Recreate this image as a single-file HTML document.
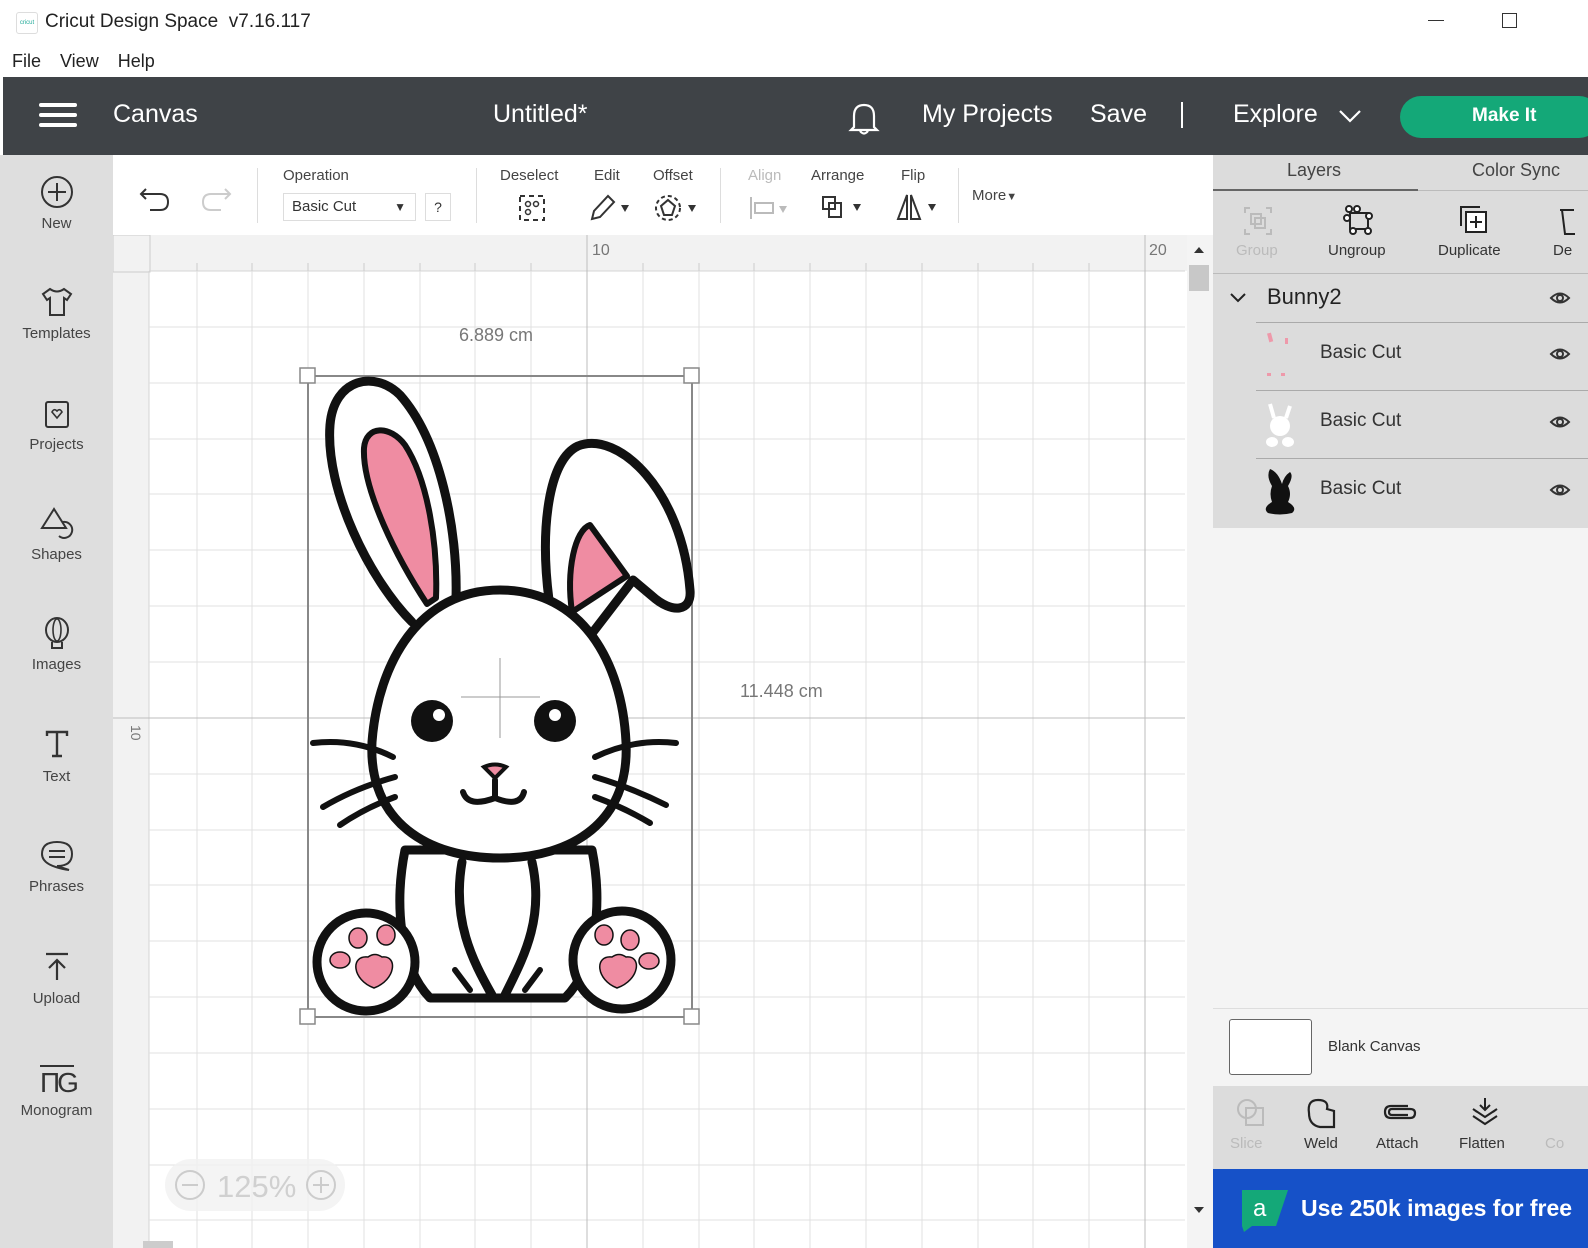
<!DOCTYPE html>
<html><head><meta charset="utf-8"><style>
*{margin:0;padding:0;box-sizing:border-box}
body{width:1588px;height:1248px;position:relative;overflow:hidden;background:#fff;font-family:"Liberation Sans",sans-serif;color:#333}
.a{position:absolute}
.side{left:0;top:155px;width:113px;height:1093px;background:#dedede}
.si{position:absolute;left:0;width:113px;text-align:center;font-size:15px;color:#444}
.si svg{display:block;margin:0 auto 6px}
.tl{font-size:15px;color:#444}
.rp{font-size:16px;color:#333}
</style></head><body>
<!-- title bar -->
<div class="a" style="left:16px;top:12px;width:22px;height:22px;border:1px solid #ddd;border-radius:3px;font-size:6px;color:#2a9;line-height:20px;text-align:center">cricut</div>
<div class="a" style="left:45px;top:11px;font-size:19px;color:#222">Cricut Design Space&nbsp; v7.16.117</div>
<div class="a" style="left:1428px;top:20px;width:16px;height:1px;background:#333"></div>
<div class="a" style="left:1502px;top:13px;width:15px;height:15px;border:1.5px solid #333"></div>
<div class="a" style="left:12px;top:51px;font-size:18px;color:#222;word-spacing:14px">File View Help</div>
<!-- top dark bar -->
<div class="a" style="left:3px;top:77px;width:1585px;height:78px;background:#3f4347"></div>
<div class="a" style="left:39px;top:103px;width:38px;height:4px;background:#fff;box-shadow:0 10px 0 #fff,0 20px 0 #fff;border-radius:2px"></div>
<div class="a" style="left:113px;top:100px;font-size:25px;color:#fff">Canvas</div>
<div class="a" style="left:493px;top:100px;font-size:25px;color:#fff">Untitled*</div>
<svg class="a" style="left:848px;top:100px" width="32" height="36" viewBox="0 0 32 36"><path d="M6 27 L6 16 Q6 5 16 5 Q26 5 26 16 L26 27 L29 30 L3 30 Z M12 31 Q16 36 20 31" fill="none" stroke="#fff" stroke-width="2.2"/></svg>
<div class="a" style="left:922px;top:100px;font-size:25px;color:#fff">My Projects</div>
<div class="a" style="left:1090px;top:100px;font-size:25px;color:#fff">Save</div>
<div class="a" style="left:1181px;top:102px;width:2px;height:26px;background:#fff"></div>
<div class="a" style="left:1233px;top:100px;font-size:25px;color:#fff">Explore</div>
<svg class="a" style="left:1338px;top:108px" width="24" height="16"><path d="M2 3 L12 13 L22 3" fill="none" stroke="#fff" stroke-width="2.2"/></svg>
<div class="a" style="left:1400px;top:96px;width:200px;height:42px;border-radius:21px;background:#14a878;color:#fff;font-size:19px;font-weight:bold;line-height:40px;padding-left:72px">Make It</div>
<!-- sidebar -->
<div class="a side"></div>
<div class="si" style="top:175px"><svg width="34" height="34"><circle cx="17" cy="17" r="15" fill="none" stroke="#333" stroke-width="2"/><path d="M17 8v18M8 17h18" stroke="#333" stroke-width="2"/></svg>New</div>
<div class="si" style="top:285px"><svg width="36" height="34"><path d="M11 4 L4 9 L8 15 L11 13 L11 30 L25 30 L25 13 L28 15 L32 9 L25 4 Q18 9 11 4Z" fill="none" stroke="#333" stroke-width="2"/></svg>Templates</div>
<div class="si" style="top:396px"><svg width="30" height="34"><rect x="4" y="6" width="22" height="25" rx="2" fill="none" stroke="#333" stroke-width="2"/><path d="M15 22 L10 16 Q12 12 15 15 Q18 12 20 16Z" fill="none" stroke="#333" stroke-width="1.6"/></svg>Projects</div>
<div class="si" style="top:506px"><svg width="36" height="34"><path d="M15 3 L3 22 L27 22Z M24 16 A8 8 0 1 1 20 30" fill="none" stroke="#333" stroke-width="2"/></svg>Shapes</div>
<div class="si" style="top:616px"><svg width="30" height="34"><ellipse cx="15" cy="14" rx="11" ry="12" fill="none" stroke="#333" stroke-width="2"/><ellipse cx="15" cy="14" rx="4" ry="11" fill="none" stroke="#333" stroke-width="1.6"/><path d="M10 26 L10 32 L20 32 L20 26" fill="none" stroke="#333" stroke-width="2"/></svg>Images</div>
<div class="si" style="top:728px"><svg width="30" height="34"><path d="M5 8 L5 4 L25 4 L25 8 M15 4 L15 28 M10 28 L20 28" fill="none" stroke="#333" stroke-width="2.4"/></svg>Text</div>
<div class="si" style="top:838px"><svg width="36" height="34"><path d="M18 4 Q33 4 33 16 Q33 28 18 28 L30 32 Q3 28 3 16 Q3 4 18 4Z" fill="none" stroke="#333" stroke-width="2"/><path d="M10 13h16M10 19h16" stroke="#333" stroke-width="2"/></svg>Phrases</div>
<div class="si" style="top:950px"><svg width="30" height="34"><path d="M4 4h22M15 30V10M7 18l8-8 8 8" fill="none" stroke="#333" stroke-width="2.2"/></svg>Upload</div>
<div class="si" style="top:1062px"><svg width="40" height="34"><text x="3" y="30" font-size="28" font-family="Liberation Sans" fill="#333" letter-spacing="-3">ПG</text><path d="M3 4h34" stroke="#333" stroke-width="2"/></svg>Monogram</div>
<!-- toolbar -->
<div class="a" style="left:113px;top:155px;width:1100px;height:80px;background:#fff"></div>
<svg class="a" style="left:138px;top:183px" width="95" height="30"><path d="M8 6 L3 11 L8 16 M3 11 L22 11 Q30 11 30 19 Q30 27 22 27 L12 27" fill="none" stroke="#333" stroke-width="2"/><path d="M87 6 L92 11 L87 16 M92 11 L73 11 Q65 11 65 19 Q65 27 73 27 L83 27" fill="none" stroke="#ccc" stroke-width="2"/></svg>
<div class="a" style="left:257px;top:168px;width:1px;height:55px;background:#ddd"></div>
<div class="a tl" style="left:283px;top:167px">Operation</div>
<div class="a" style="left:283px;top:193px;width:133px;height:28px;border:1px solid #ddd;font-size:15px;line-height:26px;padding-left:8px;color:#333">Basic Cut<span style="position:absolute;right:9px;font-size:12px">▼</span></div>
<div class="a" style="left:425px;top:193px;width:26px;height:28px;border:1px solid #ddd;font-size:14px;line-height:26px;text-align:center">?</div>
<div class="a" style="left:476px;top:168px;width:1px;height:55px;background:#ddd"></div>
<div class="a tl" style="left:500px;top:167px">Deselect</div>
<svg class="a" style="left:517px;top:193px" width="30" height="30"><rect x="3" y="3" width="24" height="24" fill="none" stroke="#333" stroke-width="2" stroke-dasharray="5 4"/><circle cx="11" cy="11" r="2.5" fill="none" stroke="#333" stroke-width="1.5"/><circle cx="19" cy="11" r="2.5" fill="none" stroke="#333" stroke-width="1.5"/><circle cx="11" cy="19" r="2.5" fill="none" stroke="#333" stroke-width="1.5"/></svg>
<div class="a tl" style="left:594px;top:167px">Edit</div>
<svg class="a" style="left:588px;top:193px" width="44" height="30"><path d="M4 26 L6 18 L20 3 L26 9 L12 24 Z" fill="none" stroke="#333" stroke-width="2"/><path d="M33 12 L41 12 L37 19Z" fill="#333"/></svg>
<div class="a tl" style="left:653px;top:167px">Offset</div>
<svg class="a" style="left:654px;top:193px" width="46" height="30"><circle cx="14" cy="15" r="12" fill="none" stroke="#333" stroke-width="2" stroke-dasharray="4 3"/><path d="M14 7 L21 13 L18 22 L10 22 L7 13Z" fill="none" stroke="#333" stroke-width="2"/><path d="M34 12 L42 12 L38 19Z" fill="#333"/></svg>
<div class="a" style="left:720px;top:168px;width:1px;height:55px;background:#ddd"></div>
<div class="a tl" style="left:748px;top:167px;color:#bbb">Align</div>
<svg class="a" style="left:748px;top:195px" width="44" height="26"><path d="M3 2v22M7 8h18v10H7z" fill="none" stroke="#bbb" stroke-width="2"/><path d="M31 11 L39 11 L35 18Z" fill="#bbb"/></svg>
<div class="a tl" style="left:811px;top:167px">Arrange</div>
<svg class="a" style="left:821px;top:194px" width="44" height="28"><path d="M2 3h12v12H2z M8 9h12v14H8z" fill="#fff" stroke="#333" stroke-width="2"/><path d="M32 10 L40 10 L36 17Z" fill="#333"/></svg>
<div class="a tl" style="left:901px;top:167px">Flip</div>
<svg class="a" style="left:896px;top:192px" width="44" height="30"><path d="M11 3 L2 27 L11 27Z M15 3 L24 27 L15 27Z" fill="none" stroke="#333" stroke-width="2"/><path d="M32 12 L40 12 L36 19Z" fill="#333"/></svg>
<div class="a" style="left:958px;top:168px;width:1px;height:55px;background:#ddd"></div>
<div class="a tl" style="left:972px;top:187px">More<span style="font-size:11px">▼</span></div>
<!-- canvas -->
<svg class="a" style="left:113px;top:235px" width="1100" height="1013">
<rect width="1100" height="1013" fill="#fff"/>
<rect x="0" y="0" width="1075" height="36" fill="#f2f2f2"/>
<rect x="0" y="0" width="36" height="1013" fill="#f2f2f2"/>
<rect x="0" y="0" width="37" height="37" fill="#f2f2f2" stroke="#ccc"/>
<line x1="36" y1="36" x2="1072" y2="36" stroke="#d4d4d4"/>
<line x1="36" y1="36" x2="36" y2="1013" stroke="#d4d4d4"/>
<g stroke="#e0e0e0" stroke-width="1">
<path d="M84 36V1013M139 36V1013M195 36V1013M251 36V1013M307 36V1013M362 36V1013M418 36V1013M530 36V1013M586 36V1013M641 36V1013M697 36V1013M753 36V1013M809 36V1013M865 36V1013M920 36V1013M976 36V1013"/>
<path d="M36 92H1072M36 148H1072M36 204H1072M36 259H1072M36 315H1072M36 371H1072M36 427H1072M36 539H1072M36 595H1072M36 650H1072M36 706H1072M36 762H1072M36 818H1072M36 874H1072M36 930H1072M36 985H1072"/>
</g>
<g stroke="#bdbdbd"><path d="M474 0V1013M1032 0V1013M0 483H1072"/></g>
<g stroke="#ccc"><path d="M84 28V36M139 28V36M195 28V36M251 28V36M307 28V36M362 28V36M418 28V36M530 28V36M586 28V36M641 28V36M697 28V36M753 28V36M809 28V36M865 28V36M920 28V36M976 28V36"/></g>
<text x="479" y="20" font-size="16" fill="#777" font-family="Liberation Sans">10</text>
<text x="1036" y="20" font-size="16" fill="#777" font-family="Liberation Sans">20</text>
<text x="6" y="490" font-size="14" fill="#777" font-family="Liberation Sans" transform="rotate(90 12 496)">10</text>
<rect x="1074" y="0" width="26" height="1013" fill="#f4f4f4"/>
<rect x="1076" y="30" width="20" height="26" fill="#c8c8c8"/>
<path d="M1081 18 L1091 18 L1086 12Z M1081 972 L1091 972 L1086 978Z" fill="#333"/>
<rect x="30" y="1006" width="30" height="7" fill="#ccc"/>
<rect x="52" y="924" width="180" height="52" rx="26" fill="#f1f1f1" opacity=".8"/>
<circle cx="77" cy="950" r="14" fill="none" stroke="#ccc" stroke-width="2"/><path d="M69 950h16" stroke="#ccc" stroke-width="2"/>
<text x="104" y="962" font-size="31" fill="#d0d0d0" font-family="Liberation Sans">125%</text>
<circle cx="208" cy="950" r="14" fill="none" stroke="#ccc" stroke-width="2"/><path d="M200 950h16M208 942v16" stroke="#ccc" stroke-width="2"/>
</svg>
<!-- bunny -->
<svg class="a" style="left:0;top:0" width="1200" height="1248">
<rect x="308" y="376" width="384" height="641" fill="none" stroke="#888" stroke-width="2"/>
<g fill="#fff" stroke="#888" stroke-width="1.5"><rect x="300" y="368" width="15" height="15"/><rect x="684" y="368" width="15" height="15"/><rect x="300" y="1009" width="15" height="15"/><rect x="684" y="1009" width="15" height="15"/></g>
<text x="459" y="341" font-size="18" fill="#777" font-family="Liberation Sans">6.889 cm</text>
<text x="740" y="697" font-size="18" fill="#777" font-family="Liberation Sans">11.448 cm</text>
<g stroke="#111" stroke-width="9" stroke-linecap="round" stroke-linejoin="round">
<path d="M412 622 C370 580 325 490 330 425 C334 378 375 370 400 395 C440 440 458 530 456 598" fill="#fff"/>
<path d="M427 604 C398 560 362 490 364 448 C366 425 390 425 405 445 C428 480 438 545 436 598 Z" fill="#ef8ca2" stroke-width="6"/>
<path d="M549 600 C540 530 548 460 578 446 C618 430 682 490 690 590 C692 612 672 614 652 596 L633 580 L590 636" fill="#fff"/>
<path d="M572 612 C566 570 575 530 590 525 L627 576 Z" fill="#ef8ca2" stroke-width="6"/>
<path d="M405 850 C395 900 398 965 430 998 L565 998 C598 965 602 900 592 850 Z" fill="#fff"/>
<path d="M462 862 C452 920 472 960 492 995 M532 862 C545 920 522 960 505 995" fill="none"/>
<path d="M470 990 L455 970 M490 995 L480 975 M505 995 L515 975 M525 990 L540 970" fill="none" stroke-width="6"/>
<path d="M500 590 C582 590 622 662 626 742 C630 822 572 858 500 858 C428 858 368 822 372 742 C378 662 420 590 500 590 Z" fill="#fff"/>
<circle cx="366" cy="962" r="49" fill="#fff"/>
<circle cx="622" cy="960" r="49" fill="#fff"/>
</g>
<g fill="#111"><circle cx="432" cy="721" r="21"/><circle cx="555" cy="721" r="21"/></g>
<g fill="#fff"><circle cx="439" cy="715" r="6"/><circle cx="555" cy="715" r="6"/></g>
<path d="M484 767 Q495 762 506 767 L495 778Z" fill="#ef8ca2" stroke="#111" stroke-width="4"/>
<path d="M463 792 Q468 808 495 798 Q520 808 524 792 M495 780 V798" fill="none" stroke="#111" stroke-width="6" stroke-linecap="round"/>
<g stroke="#111" stroke-width="6" stroke-linecap="round" fill="none">
<path d="M313 743 Q355 738 393 757 M323 807 Q355 788 395 777 M340 825 Q365 808 395 797"/>
<path d="M676 743 Q635 738 595 757 M666 805 Q632 788 595 777 M650 823 Q625 808 595 797"/>
</g>
<g fill="#ef8ca2" stroke="#111" stroke-width="1.5">
<ellipse cx="358" cy="938" rx="9" ry="10"/><ellipse cx="386" cy="935" rx="9" ry="10"/><ellipse cx="340" cy="960" rx="10" ry="8"/>
<path d="M374 988 C352 980 350 955 368 957 Q375 952 382 957 C398 955 396 980 374 988Z"/>
<ellipse cx="604" cy="935" rx="9" ry="10"/><ellipse cx="630" cy="940" rx="9" ry="10"/><ellipse cx="649" cy="961" rx="10" ry="8"/>
<path d="M617 988 C596 980 594 955 612 957 Q619 952 626 957 C642 955 640 980 617 988Z"/>
</g>
<path d="M500 658 V738 M461 697 H540" stroke="#999" stroke-width="1"/>
</svg>
<!-- right panel -->
<div class="a" style="left:1213px;top:155px;width:375px;height:1093px;background:#f4f4f4"></div>
<div class="a" style="left:1213px;top:155px;width:375px;height:373px;background:#dcdcdc"></div>
<div class="a" style="left:1213px;top:189px;width:205px;height:2px;background:#666"></div>
<div class="a" style="left:1418px;top:190px;width:170px;height:1px;background:#bbb"></div>
<div class="a" style="left:1287px;top:160px;font-size:18px;color:#444">Layers</div>
<div class="a" style="left:1472px;top:160px;font-size:18px;color:#444">Color Sync</div>
<svg class="a" style="left:1242px;top:205px" width="32" height="32"><path d="M3 8V3h5M24 3h5v5M29 24v5h-5M8 29H3v-5" fill="none" stroke="#bbb" stroke-width="2"/><rect x="9" y="9" width="10" height="10" fill="none" stroke="#bbb" stroke-width="2"/><rect x="13" y="13" width="10" height="10" fill="none" stroke="#bbb" stroke-width="2"/></svg>
<div class="a rp" style="left:1236px;top:242px;font-size:15px;color:#bbb">Group</div>
<svg class="a" style="left:1343px;top:204px" width="32" height="32"><g fill="none" stroke="#222" stroke-width="2"><rect x="7" y="9" width="18" height="16"/><circle cx="6" cy="5" r="3" fill="#fff"/><circle cx="14" cy="5" r="3" fill="#fff"/><circle cx="4" cy="14" r="3" fill="#fff"/><circle cx="26" cy="12" r="3" fill="#fff"/><circle cx="10" cy="27" r="3" fill="#fff"/><circle cx="25" cy="27" r="3" fill="#fff"/></g></svg>
<div class="a rp" style="left:1328px;top:242px;font-size:15px">Ungroup</div>
<svg class="a" style="left:1458px;top:204px" width="32" height="32"><path d="M3 22V3h19" fill="none" stroke="#222" stroke-width="2"/><rect x="8" y="8" width="20" height="20" fill="#fff" stroke="#222" stroke-width="2"/><path d="M18 12v12M12 18h12" stroke="#222" stroke-width="2"/></svg>
<div class="a rp" style="left:1438px;top:242px;font-size:15px">Duplicate</div>
<svg class="a" style="left:1558px;top:206px" width="30" height="30"><path d="M2 4h14M4 4l3 24h10" fill="none" stroke="#222" stroke-width="2"/></svg>
<div class="a rp" style="left:1553px;top:242px;font-size:15px">De</div>
<div class="a" style="left:1213px;top:273px;width:375px;height:1px;background:#bbb"></div>
<svg class="a" style="left:1229px;top:292px" width="18" height="12"><path d="M2 2l7 7 7-7" fill="none" stroke="#222" stroke-width="2"/></svg>
<div class="a" style="left:1267px;top:284px;font-size:22px;color:#222">Bunny2</div>
<div class="a" style="left:1256px;top:322px;width:332px;height:1px;background:#aaa"></div>
<div class="a" style="left:1256px;top:390px;width:332px;height:1px;background:#aaa"></div>
<div class="a" style="left:1256px;top:458px;width:332px;height:1px;background:#aaa"></div>
<svg class="a" style="left:1260px;top:330px" width="40" height="52"><rect x="8" y="3" width="4" height="9" fill="#e9a" transform="rotate(-15 10 7)"/><rect x="25" y="8" width="3" height="6" fill="#e9a"/><rect x="7" y="43" width="4" height="3" fill="#e9a"/><rect x="21" y="43" width="4" height="3" fill="#e9a"/></svg>
<svg class="a" style="left:1260px;top:398px" width="40" height="52"><ellipse cx="20" cy="28" rx="10" ry="10" fill="#fff"/><ellipse cx="12" cy="44" rx="6" ry="5" fill="#fff"/><ellipse cx="28" cy="44" rx="6" ry="5" fill="#fff"/><path d="M14 20 L10 6 M26 20 L30 8" stroke="#fff" stroke-width="4"/></svg>
<svg class="a" style="left:1260px;top:466px" width="40" height="52"><path d="M10 3 Q6 10 12 20 Q9 28 12 36 Q2 42 8 47 Q20 50 32 47 Q38 42 28 36 Q32 28 28 20 Q34 10 30 6 Q24 10 22 18 Q18 6 10 3Z" fill="#111"/></svg>
<div class="a" style="left:1320px;top:342px;font-size:19px;color:#333">Basic Cut</div>
<div class="a" style="left:1320px;top:410px;font-size:19px;color:#333">Basic Cut</div>
<div class="a" style="left:1320px;top:478px;font-size:19px;color:#333">Basic Cut</div>
<svg class="a" style="left:1548px;top:289px" width="40" height="220"><g fill="none" stroke="#333" stroke-width="2"><path d="M3 9 Q12 0 21 9 Q12 18 3 9Z"/><circle cx="12" cy="9" r="3"/><path d="M3 65 Q12 56 21 65 Q12 74 3 65Z"/><circle cx="12" cy="65" r="3"/><path d="M3 133 Q12 124 21 133 Q12 142 3 133Z"/><circle cx="12" cy="133" r="3"/><path d="M3 201 Q12 192 21 201 Q12 210 3 201Z"/><circle cx="12" cy="201" r="3"/></g></svg>
<div class="a" style="left:1213px;top:1008px;width:375px;height:1px;background:#ddd"></div>
<div class="a" style="left:1229px;top:1019px;width:83px;height:56px;background:#fff;border:1px solid #666;border-radius:3px"></div>
<div class="a" style="left:1328px;top:1038px;font-size:15px;color:#333">Blank Canvas</div>
<div class="a" style="left:1213px;top:1086px;width:375px;height:83px;background:#dcdcdc"></div>
<svg class="a" style="left:1235px;top:1097px" width="32" height="32"><circle cx="12" cy="12" r="9" fill="none" stroke="#bbb" stroke-width="2"/><path d="M11 11h17v17H11z" fill="none" stroke="#bbb" stroke-width="2"/></svg>
<div class="a" style="left:1230px;top:1135px;font-size:15px;color:#bbb">Slice</div>
<svg class="a" style="left:1305px;top:1097px" width="32" height="32"><path d="M4 16 Q2 3 13 3 Q24 3 22 12 L29 14 L29 30 L15 30 Q4 28 4 16Z" fill="none" stroke="#222" stroke-width="2.2"/></svg>
<div class="a" style="left:1304px;top:1135px;font-size:15px;color:#333">Weld</div>
<svg class="a" style="left:1382px;top:1100px" width="36" height="24"><path d="M26 6 H9 Q3 6 3 12 Q3 18 9 18 H28 Q33 18 33 13 Q33 9 28 9 H10 Q7 9 7 12 Q7 15 10 15 H26" fill="none" stroke="#222" stroke-width="2.2"/></svg>
<div class="a" style="left:1376px;top:1135px;font-size:15px;color:#333">Attach</div>
<svg class="a" style="left:1468px;top:1096px" width="34" height="34"><path d="M17 2v12M12 9l5 5 5-5M5 13l12 8 12-8M5 20l12 8 12-8M5 13l4 3M29 13l-4 3" fill="none" stroke="#222" stroke-width="2"/></svg>
<div class="a" style="left:1459px;top:1135px;font-size:15px;color:#333">Flatten</div>
<div class="a" style="left:1545px;top:1135px;font-size:15px;color:#bbb">Co</div>
<div class="a" style="left:1213px;top:1169px;width:375px;height:79px;background:#1651c8"></div>
<svg class="a" style="left:1236px;top:1186px" width="56" height="48"><path d="M6 4 H52 L40 40 H16 L8 46 L6 40Z" fill="#14a878"/><text x="17" y="30" font-size="24" fill="#fff" font-family="Liberation Sans">a</text></svg>
<div class="a" style="left:1301px;top:1195px;font-size:23px;color:#fff;font-weight:bold">Use 250k images for free</div>
</body></html>
